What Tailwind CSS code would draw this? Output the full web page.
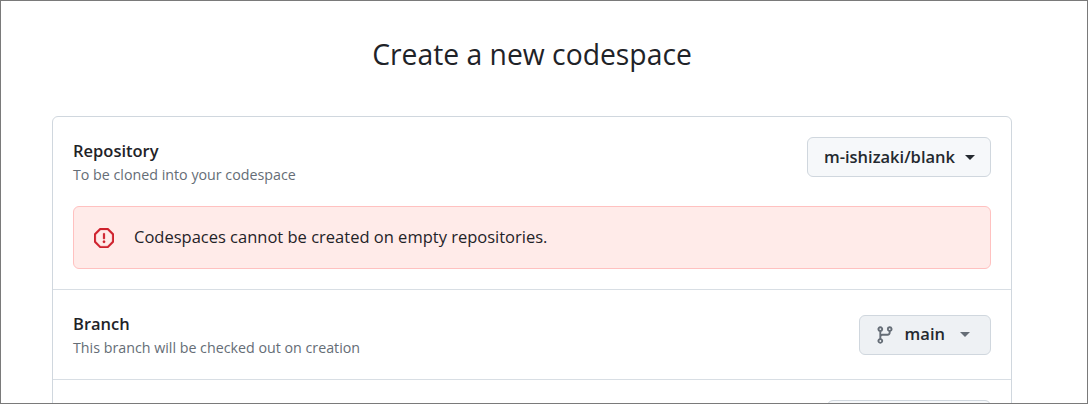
<!DOCTYPE html>
<html lang="en">
<head>
    <meta charset="UTF-8">
    <title>Create a new codespace</title>
    <script src="https://cdn.jsdelivr.net/npm/@tailwindcss/browser@4"></script>
</head>
<body class="bg-white font-['Open_Sans',sans-serif]">
    <div class="h-[404px] overflow-hidden border border-[#7a7a7a] pr-[24px]">
        <h1 class="pt-[31px] h-[115px] text-center text-[28.3px] leading-[44px] text-[#1f2328]">Create a new codespace</h1>

        <div class="mx-[51px] rounded-t-md border border-[#d0d7de]">
            <div class="p-5 border-b border-[#d8dee4]">
                <div class="flex justify-between items-start">
                    <div class="pt-[2px]">
                        <div class="text-[16.5px] leading-6 font-semibold text-[#1f2328]">Repository</div>
                        <div class="mt-[2px] text-[14.25px] leading-5 text-[#656d76]">To be cloned into your codespace</div>
                    </div>
                    <button class="flex items-center h-10 pl-4 pr-[15px] rounded-md border border-[#d0d7de] bg-[#f6f8fa] text-[16.5px] font-semibold text-[#24292f]">
                        m-ishizaki/blank
                        <span class="ml-[10px] border-x-[5px] border-t-[5px] border-x-transparent border-t-[#24292f]"></span>
                    </button>
                </div>
                <div class="flex items-center mt-[21px] h-[63px] px-5 rounded-md border border-[#ffc1c0] bg-[#ffebe9]">
                    <svg class="mr-5 shrink-0" width="20" height="20" viewBox="0 0 16 16" fill="#cf222e" stroke="#cf222e" stroke-width="0.2"><path d="M4.47.22A.749.749 0 0 1 5 0h6c.199 0 .389.079.53.22l4.25 4.25c.141.14.22.331.22.53v6a.749.749 0 0 1-.22.53l-4.25 4.25A.749.749 0 0 1 11 16H5a.749.749 0 0 1-.53-.22L.22 11.53A.749.749 0 0 1 0 11V5c0-.199.079-.389.22-.53Zm.84 1.28L1.5 5.31v5.38l3.81 3.81h5.38l3.81-3.81V5.31L10.69 1.5ZM8 4a.75.75 0 0 1 .75.75v3.5a.75.75 0 0 1-1.5 0v-3.5A.75.75 0 0 1 8 4Zm0 8a1 1 0 1 1 0-2 1 1 0 0 1 0 2Z"/></svg>
                    <span class="text-[16.5px] text-[#1f2328]">Codespaces cannot be created on empty repositories.</span>
                </div>
            </div>

            <div class="flex justify-between items-center h-[90px] px-5 border-b border-[#d8dee4]">
                <div>
                    <div class="text-[16.5px] leading-6 font-semibold text-[#1f2328]">Branch</div>
                    <div class="mt-[2px] text-[14.25px] leading-5 text-[#656d76]">This branch will be checked out on creation</div>
                </div>
                <button class="flex items-center h-10 pl-[15px] pr-5 rounded-md border border-[#d0d7de] bg-[#eef1f4] text-[16.5px] font-semibold text-[#24292f]">
                    <svg class="mr-[10px]" width="20" height="20" viewBox="0 0 16 16" fill="#656d76"><path d="M9.5 3.25a2.25 2.25 0 1 1 3 2.122V6A2.5 2.5 0 0 1 10 8.5H6a1 1 0 0 0-1 1v1.128a2.251 2.251 0 1 1-1.5 0V5.372a2.25 2.25 0 1 1 1.5 0v1.836A2.493 2.493 0 0 1 6 7h4a1 1 0 0 0 1-1v-.628A2.25 2.25 0 0 1 9.5 3.25Zm-6 0a.75.75 0 1 0 1.5 0 .75.75 0 0 0-1.5 0Zm8.25-.75a.75.75 0 1 0 0 1.5.75.75 0 0 0 0-1.5ZM4.25 12a.75.75 0 1 0 0 1.5.75.75 0 0 0 0-1.5Z"/></svg>
                    main
                    <span class="ml-[15px] border-x-[5px] border-t-[5px] border-x-transparent border-t-[#656d76]"></span>
                </button>
            </div>

            <div class="flex justify-end px-5 pt-5">
                <div class="w-[164px] h-10 rounded-md border border-[#d0d7de] bg-[#f6f8fa]"></div>
            </div>
        </div>
    </div>
</body>
</html>
